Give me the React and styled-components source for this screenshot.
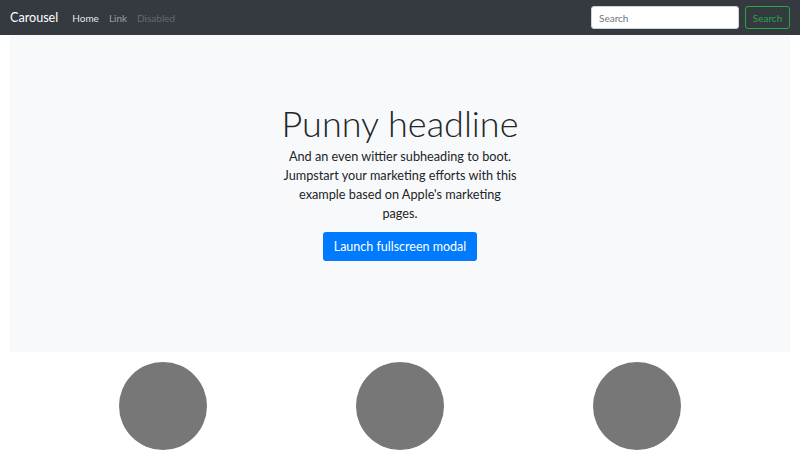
import React from "react";
import styled, { createGlobalStyle } from "styled-components";

const GlobalStyle = createGlobalStyle`
  body {
    margin: 0;
    background: #fff;
    font-family: Lato, "Open Sans", sans-serif;
    color: #212529;
  }
  * { box-sizing: border-box; }
`;

const NavBar = styled.nav`
  height: 35px;
  background: #343a40;
  display: flex;
  align-items: center;
  padding: 0 10px;
`;

const Brand = styled.a`
  color: #fff;
  font-size: 12.6px;
  margin-right: 14px;
  text-decoration: none;
`;

const NavLinks = styled.div`
  display: flex;
  gap: 10px;
  flex: 1;
`;

const NavLink = styled.a`
  font-size: 10px;
  text-decoration: none;
  color: ${(p) =>
    p.$active ? "rgba(255,255,255,0.9)" : p.$disabled ? "rgba(255,255,255,0.25)" : "rgba(255,255,255,0.5)"};
`;

const SearchForm = styled.form`
  display: flex;
  gap: 6px;
  margin: 0;
`;

const SearchInput = styled.input`
  width: 148px;
  height: 23px;
  border: 1px solid #ced4da;
  border-radius: 3px;
  padding: 0 7px;
  font-family: inherit;
  font-size: 10px;
  outline: none;
  &::placeholder { color: #6c757d; }
`;

const SearchButton = styled.button`
  height: 23px;
  width: 45px;
  padding: 0;
  border: 1px solid #28a745;
  border-radius: 3px;
  background: transparent;
  color: #28a745;
  font-family: inherit;
  font-size: 10px;
`;

const Hero = styled.section`
  margin: 0 10px 10px;
  height: 317px;
  background: #f8f9fa;
  display: flex;
  flex-direction: column;
  align-items: center;
  padding-top: 66px;
  text-align: center;
`;

const Headline = styled.h1`
  margin: 0 0 2px;
  font-size: 36px;
  line-height: 44px;
  font-weight: 300;
  color: #212529;
`;

const Lead = styled.p`
  margin: 0 0 9px;
  width: 240px;
  font-size: 12.7px;
  line-height: 19px;
  color: #212529;
`;

const PrimaryButton = styled.button`
  height: 29px;
  padding: 0 11px;
  border: none;
  border-radius: 3px;
  background: #007bff;
  color: #fff;
  font-family: inherit;
  font-size: 12.5px;
`;

const Features = styled.div`
  width: 712px;
  margin: 0 auto;
  display: grid;
  grid-template-columns: repeat(3, 1fr);
`;

const Feature = styled.div`
  display: flex;
  justify-content: center;
`;

const Circle = styled.div`
  width: 88px;
  height: 88px;
  border-radius: 50%;
  background: #777;
`;

export default function App() {
  return (
    <>
      <GlobalStyle />
      <NavBar>
        <Brand href="#">Carousel</Brand>
        <NavLinks>
          <NavLink href="#" $active>Home</NavLink>
          <NavLink href="#">Link</NavLink>
          <NavLink $disabled>Disabled</NavLink>
        </NavLinks>
        <SearchForm onSubmit={(e) => e.preventDefault()}>
          <SearchInput placeholder="Search" />
          <SearchButton type="submit">Search</SearchButton>
        </SearchForm>
      </NavBar>
      <Hero>
        <Headline>Punny headline</Headline>
        <Lead>
          And an even wittier subheading to boot. Jumpstart your marketing efforts with this example based on Apple's marketing pages.
        </Lead>
        <PrimaryButton>Launch fullscreen modal</PrimaryButton>
      </Hero>
      <Features>
        <Feature><Circle /></Feature>
        <Feature><Circle /></Feature>
        <Feature><Circle /></Feature>
      </Features>
    </>
  );
}
